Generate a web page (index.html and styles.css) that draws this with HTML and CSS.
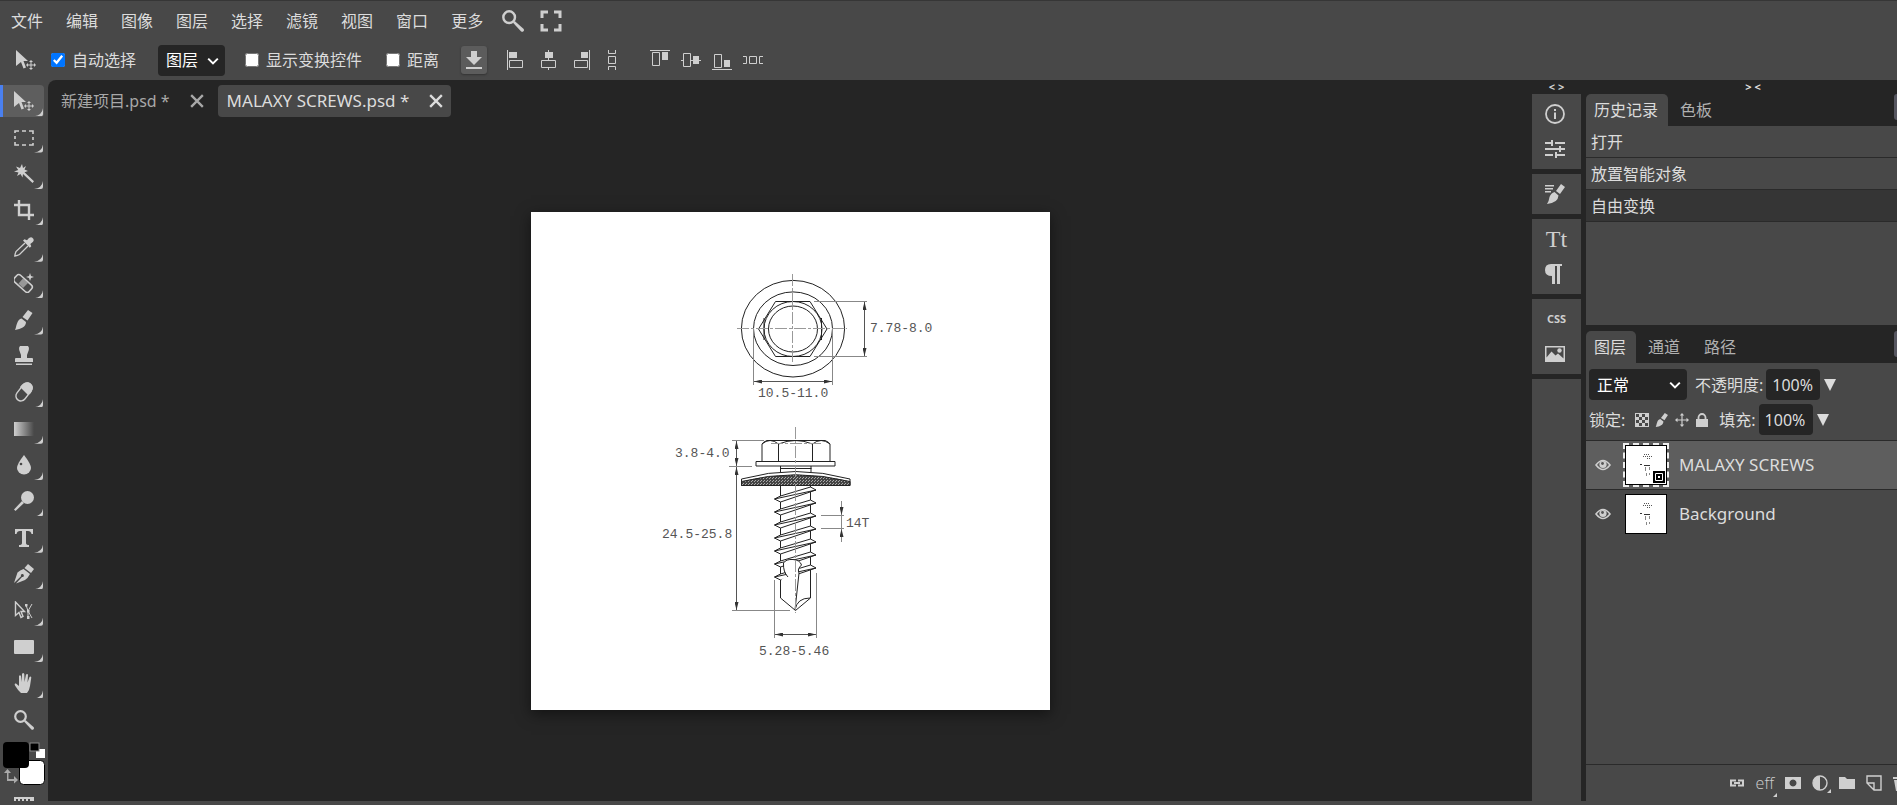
FILE: index.html
```html
<!DOCTYPE html>
<html lang="zh-CN">
<head>
  <meta charset="UTF-8">
  <title>MALAXY SCREWS.psd</title>
  <link rel="stylesheet" href="styles.css">
</head>
<body>
  <!-- shared icons -->
  <svg class="sprite" aria-hidden="true">
    <symbol id="i-move" viewBox="0 0 20 20"><path d="M0 0L12 11H7.500L10 17.500L7.500 18.500L5 12L0 16Z"/><path d="M15 10l2 2h-1.500v2.500H18V13l2 2-2 2v-1.500h-2.500V18H17l-2 2-2-2h1.500v-2.500H12V17l-2-2 2-2v1.500h2.500V12H13z"/></symbol>
    <symbol id="i-search" viewBox="0 0 20 20"><circle cx="6.500" cy="6.500" r="5.300" fill="none" stroke="currentColor" stroke-width="2.200"/><path d="M10 11.500l1.500-1.500 8 7q1 1.200 0 2.300t-2.300 0z"/></symbol>
    <symbol id="i-close" viewBox="0 0 12 12"><path d="M1 1l10 10M11 1L1 11" stroke="currentColor" stroke-width="2"/></symbol>
    <symbol id="i-chevron" viewBox="0 0 10 6"><path d="M1 1l4 4 4-4" fill="none" stroke="currentColor" stroke-width="1.700"/></symbol>
    <symbol id="i-brush" viewBox="0 0 20 20"><path d="M14 0l4.500 3-5 7.500-5-3.500zM7.500 8.500l4.500 3.500c0 5-5 7-11 8 1-2 1-4 2-6.500C4 10.500 5.500 9 7.500 8.500z"/></symbol>
    <symbol id="i-eye" viewBox="0 0 16 12"><path d="M1 6q7-9 14 0-7 9-14 0z" fill="none" stroke="currentColor" stroke-width="1.600"/><circle cx="8" cy="5.500" r="3.600"/><circle cx="7.500" cy="4.500" r="1.400" fill="#555"/></symbol>
    <symbol id="i-thumb" viewBox="0 0 40 38"><path d="M18 8.500h5M17 10.500h10M21 12.500h4" stroke="#555" stroke-dasharray="1 1"/><path d="M14 18.500h2M18 19.500h6" stroke="#333"/><path d="M19.500 21v4M23.500 21v3M20.500 27v3M23.500 27v2" stroke="#888" fill="none"/></symbol>
    <symbol id="thread" viewBox="0 0 42 16" overflow="visible"><path d="M6 7L0 10l6 3L41.500 1 36-2zM0 10L41.500 1" fill="#fff" stroke="#222" stroke-width="1"/></symbol>
  </svg>

  <div class="app">
    <header class="menubar">
      <nav class="menu">
        <button>文件</button>
        <button>编辑</button>
        <button>图像</button>
        <button>图层</button>
        <button>选择</button>
        <button>滤镜</button>
        <button>视图</button>
        <button>窗口</button>
        <button>更多</button>
      </nav>
      <button class="icon-btn" aria-label="搜索"><svg width="22" height="22"><use href="#i-search"/></svg></button>
      <button class="icon-btn" aria-label="全屏"><svg width="22" height="22" viewBox="0 0 22 22"><path d="M2 8V2h6M14 2h6v6M20 14v6h-6M8 20H2v-6" fill="none" stroke="currentColor" stroke-width="3"/></svg></button>
    </header>

    <div class="options">
      <svg class="current-tool" width="20" height="20"><use href="#i-move"/></svg>
      <label class="check auto"><input type="checkbox" checked>自动选择</label>
      <span class="select target">
        <select aria-label="选择目标"><option>图层</option></select>
        <svg width="12" height="8"><use href="#i-chevron"/></svg>
      </span>
      <label class="check transform"><input type="checkbox">显示变换控件</label>
      <label class="check distance"><input type="checkbox">距离</label>
      <button class="download" aria-label="下载"><svg width="18" height="20" viewBox="0 0 18 20"><path d="M6 1h6v6h5l-8 8-8-8h5zM1 17h16v2H1z"/></svg></button>
      <div class="align">
        <button aria-label="左对齐"><svg viewBox="0 0 20 20"><path d="M3 2h8v6H3z"/><path d="M1.500 0v20M3.500 10.500h13v7h-13z"/></svg></button>
        <button aria-label="水平居中"><svg viewBox="0 0 20 20"><path d="M6 2h8v6H6z"/><path d="M9.500 0v10M9.500 18v2M2.500 10.500h14v7h-14z"/></svg></button>
        <button aria-label="右对齐"><svg viewBox="0 0 20 20"><path d="M9 2h7v6H9z"/><path d="M17.500 0v20M2.500 10.500h13v7h-13z"/></svg></button>
        <button aria-label="垂直分布"><svg viewBox="0 0 20 20"><path d="M3.500 0v3.500h7V0M3.500 6.500h7v7h-7zM3.500 20v-3.500h7V20"/></svg></button>
      </div>
      <div class="align">
        <button aria-label="顶对齐"><svg viewBox="0 0 20 20"><path d="M12 2h6v8h-6z"/><path d="M0 .5h20M2.500 2.500h7v13h-7z"/></svg></button>
        <button aria-label="垂直居中"><svg viewBox="0 0 20 20"><path d="M12 6h6v8h-6z"/><path d="M0 10.500h2M10 10.500h10M2.500 3.500h7v13h-7z"/></svg></button>
        <button aria-label="底对齐"><svg viewBox="0 0 20 20"><path d="M12 10h6v7h-6z"/><path d="M0 19.500h20M2.500 4.500h7v13h-7z"/></svg></button>
        <button aria-label="水平分布"><svg viewBox="0 0 20 20"><path d="M0 6.500h3.500v7H0M6.500 6.500h7v7h-7zM20 6.500h-3.500v7H20"/></svg></button>
      </div>
    </div>

    <main class="body">
      <aside class="toolbar">
        <div class="tools">
          <button class="tool more active" aria-label="移动"><svg><use href="#i-move"/></svg></button>
          <button class="tool more" aria-label="选框"><svg viewBox="0 0 20 20"><path d="M1 5V3h4M8 3h4M15 3h4v3M19 9v3M19 15v2h-4M12 17H8M5 17H1v-3M1 11V8" fill="none" stroke="currentColor" stroke-width="1.600"/></svg></button>
          <button class="tool more" aria-label="魔棒"><svg viewBox="0 0 20 20"><path d="M8 0l1 4 3-2-1.500 3.500L14 7l-3.500 1.200 9.500 9-1.500 1.800L9 10l-.5 3.500L6.500 10 3 12l1.500-3.500L0 7.500 4.200 6 2 2.500 6 4z"/></svg></button>
          <button class="tool more" aria-label="裁剪"><svg viewBox="0 0 20 20"><path d="M0 5h15v15M5 0v15h15" fill="none" stroke="currentColor" stroke-width="2.400"/></svg></button>
          <button class="tool more" aria-label="吸管"><svg viewBox="0 0 20 20"><path d="M11 6L2 14.500Q1 17 .8 19q3-.5 4.700-1.500L14 9" fill="none" stroke="currentColor" stroke-width="1.300"/><path d="M9 3.500l1.500-1.200 2.500 1Q15.500-.5 18 .5q3 2 .8 4.500l-2.500 2 1 2.200-1.500 1.500z"/></svg></button>
          <button class="tool more" aria-label="修复"><svg viewBox="0 0 20 20"><rect x="-1" y="6" width="20" height="9" rx="3" transform="rotate(42 9 10.500)" fill="none" stroke="currentColor" stroke-width="1.600"/><path d="M9 5.500l5 4.500-5 5-4.500-4.500z" opacity=".6"/><path d="M16 0l1 3 3 1-3 1-1 3-1-3-3-1 3-1z"/></svg></button>
          <button class="tool more" aria-label="画笔"><svg><use href="#i-brush"/></svg></button>
          <button class="tool" aria-label="图章"><svg viewBox="0 0 20 20"><path d="M6 0h8q1.500 1.500.8 4L13 9v3h5q1 0 1 1v3H1v-3q0-1 1-1h5V9L5.200 4Q4.500 1.500 6 0zM2 17.500h16V19H2z"/></svg></button>
          <button class="tool more" aria-label="橡皮"><svg viewBox="0 0 20 20"><rect x="5" y="0" width="10" height="20" rx="5" transform="rotate(38 10 10)" fill="none" stroke="currentColor" stroke-width="1.400"/><path d="M6 5Q10-1 15 .5q5 2.500 3.500 7Q17 12 14 13z"/></svg></button>
          <button class="tool more" aria-label="渐变"><svg viewBox="0 0 20 20"><defs><linearGradient id="grad"><stop offset="0" stop-color="#cfcfcf"/><stop offset="1" stop-color="#484848"/></linearGradient></defs><path d="M0 3h20v14H0z" fill="url(#grad)"/></svg></button>
          <button class="tool more" aria-label="模糊"><svg viewBox="0 0 20 20"><path d="M10 0Q17 9 17 13a7 6.500 0 0 1-14 0Q3 9 10 0z"/><circle cx="7" cy="9" r="1.300" fill="#484848"/></svg></button>
          <button class="tool more" aria-label="减淡"><svg viewBox="0 0 20 20"><circle cx="13.500" cy="6.500" r="6.500"/><path d="M8 10l2 2-8.500 8L0 18.500z"/></svg></button>
          <button class="tool more" aria-label="文字"><svg viewBox="0 0 20 20"><path d="M1 1h18v5h-1.500Q17 3 14 3h-2v12q0 2 3 2v2H5v-2q3 0 3-2V3H6Q3 3 2.500 6H1z"/></svg></button>
          <button class="tool more" aria-label="钢笔"><svg viewBox="0 0 20 20"><path d="M14 0l6 5-3 4-6.500-5zM9.500 5l6.500 5q-2 4-5 6L2 19.500l6-6.500a1.500 1.500 0 1 0-1-.8L0 19l3.500-10.500Q6 6 9.500 5z"/></svg></button>
          <button class="tool more" aria-label="路径选择"><svg viewBox="0 0 20 20"><path d="M1.500 1l9 9.500H7l2 5-2 1L5 11.500l-3.500 3z" fill="none" stroke="currentColor" stroke-width="1.400"/><path d="M18 3l-4 7 4 7M12 4l2 6v6" fill="none" stroke="currentColor"/><path d="M11 3h2.500v2.500H11zM13 9h2.500v2.500H13zM13 15h2.500v3H13z"/></svg></button>
          <button class="tool more" aria-label="矩形"><svg viewBox="0 0 20 20"><rect y="3" width="20" height="14" rx="1"/></svg></button>
          <button class="tool more" aria-label="抓手"><svg viewBox="0 0 20 20"><path d="M5 10V3q1-1.500 2 0l.8 6L8 1q1.200-1.800 2.300 0L10.500 9 12 1.500q1.500-1.300 2 .2L13.500 9.500 15.500 4q1.300-1 1.800.5L16 13q-.5 4-3 7H7Q4 17.500 1 12.500 0 10 2 10.500L5 13z"/></svg></button>
          <button class="tool" aria-label="缩放"><svg><use href="#i-search"/></svg></button>
        </div>
        <svg class="swatches" width="48" height="46" viewBox="0 0 48 46">
          <rect x="36" y="8" width="9" height="9" fill="#fff"/>
          <rect x="30" y="2" width="9" height="8" stroke="#888"/>
          <rect x="19.500" y="19.500" width="25" height="24" rx="4" fill="#fff" stroke="#000"/>
          <rect x="3" y="1" width="26" height="26" rx="4"/>
          <path d="M4 32l3.500-4 3.500 4H8.500v6H14v-3l4 4-4 3.500V40H7v-8z" fill="#aaa"/>
        </svg>
        <svg class="quickmask" width="20" height="14" viewBox="0 0 20 14"><path d="M0 0h20v14H0z" fill="#cfcfcf"/><path d="M2 2h2v3H2zM6 2h2v3H6zM10 2h2v3h-2zM14 2h2v3h-2z" fill="#484848"/></svg>
      </aside>

      <section class="document">
        <div class="tabs">
          <div class="tab">新建项目.psd * <button aria-label="关闭"><svg width="14" height="14"><use href="#i-close"/></svg></button></div>
          <div class="tab active">MALAXY SCREWS.psd * <button aria-label="关闭"><svg width="14" height="14"><use href="#i-close"/></svg></button></div>
        </div>
        <div class="workspace">
          <svg class="artboard" width="519" height="498" viewBox="532 212 519 498">
            <defs>
              <pattern id="hatch" width="3" height="3" patternUnits="userSpaceOnUse"><rect width="3" height="3" fill="#444"/><path d="M0 0h1v1H0zM2 1h1v1H2z" fill="#aaa"/></pattern>
              <marker id="arrow" viewBox="0 0 8 4" refX="8" refY="2" markerWidth="8" markerHeight="4" orient="auto-start-reverse" markerUnits="userSpaceOnUse"><path d="M0 0l8 2-8 2z" fill="#333"/></marker>
            </defs>

            <!-- top view -->
            <g class="ink">
              <ellipse cx="794" cy="328.700" rx="51.600" ry="48.300"/>
              <ellipse cx="794" cy="328.700" rx="39.500" ry="36.800"/>
              <path d="M759.500 329L776.500 301.500H811L828 329L811 356.500H776.500Z"/>
              <ellipse cx="794" cy="329" rx="29" ry="27.500"/>
              <ellipse cx="794" cy="329" rx="24.500" ry="23"/>
              <path d="M765 318v22M822.500 318v22"/>
            </g>
            <path class="axis" d="M793.500 274v90M738 328.500h110"/>
            <g class="dim">
              <path d="M815 301.500h53M815 356.500h53M754.500 329v56M833.500 329v56"/>
              <path class="arrows" d="M865.500 302v54"/>
              <path class="arrows" d="M755 381.500h78"/>
            </g>
            <text x="871" y="332">7.78-8.0</text>
            <text x="759" y="397">10.5-11.0</text>

            <!-- side view -->
            <g class="ink">
              <path d="M763 462V444Q764 442 768 440.500H826Q830 442 831 444V462M779.500 462V444M813.500 462V444M763 444Q771 437 779.500 444Q796.500 437 813.500 444Q822 437 831 444"/>
              <path d="M757 461.500h79v4.500h-79z"/>
              <path d="M781.500 466v6M812 466v6M781.500 468.500h31"/>
              <path d="M742.500 479Q796.500 464 851 479V485.500H742.500Z"/>
              <path d="M742.500 481.500Q796.500 468 851 481.500V485.500H742.500Z" fill="url(#hatch)"/>
              <path d="M781.500 486V598L796.500 610.500L811.500 598V486"/>
            </g>
            <use href="#thread" x="775.500" y="489" width="42" height="16"/>
            <use href="#thread" x="775.500" y="502" width="42" height="16"/>
            <use href="#thread" x="775.500" y="515" width="42" height="16"/>
            <use href="#thread" x="775.500" y="528" width="42" height="16"/>
            <use href="#thread" x="775.500" y="541" width="42" height="16"/>
            <use href="#thread" x="775.500" y="554" width="42" height="16"/>
            <use href="#thread" x="775.500" y="567" width="42" height="16"/>
            <path d="M784.500 563Q786 559 794 559.500Q801 560 802.500 565Q799 569 800 573L797 606L782.500 597.500V579L789 576Q784 572 784.500 563Z" fill="#fff"/>
            <path class="ink" d="M789 577Q784 572 784.500 563Q787 559 794 559.500Q801 560 802.500 565Q798 569 800 573L796 610Q798 598 811 598"/>
            <path class="axis" d="M796.500 427v186M772 443.500h50"/>
            <g class="dim">
              <path d="M733 440.500h32M730 466.500h23M733 610.500h58M822 515.500h23M822 528.500h23M775.500 580v58M817.500 573v65"/>
              <path class="arrows" d="M737.500 441v25"/>
              <path class="arrows" d="M737.500 467v143"/>
              <path class="arrows" d="M776 634.500h41"/>
              <path marker-end="url(#arrow)" d="M842.500 501v14"/>
              <path marker-end="url(#arrow)" d="M842.500 542v-13"/>
              <path d="M842.500 515v14"/>
            </g>
            <text x="676" y="457">3.8-4.0</text>
            <text x="663" y="538">24.5-25.8</text>
            <text x="847" y="527">14T</text>
            <text x="760" y="655">5.28-5.46</text>
          </svg>
        </div>
      </section>

      <aside class="dock">
        <button class="collapse">&lt; &gt;</button>
        <div class="dock-group">
          <button aria-label="信息"><svg viewBox="0 0 20 20"><circle cx="10" cy="10" r="9" fill="none" stroke="currentColor" stroke-width="1.800"/><path d="M9 5h2v2H9zM9 8.500h2V15H9z"/></svg></button>
          <button aria-label="属性"><svg viewBox="0 0 20 20"><path d="M0 3h8v2H0zM10 3h10v2H10zM6 1h2v6H6zM0 9h14v2H0zM16 9h4v2h-4zM14 7h2v6h-2zM0 15h8v2H0zM12 15h8v2h-8zM10 13h2v6h-2z"/></svg></button>
        </div>
        <div class="dock-group">
          <button aria-label="画笔设置"><svg viewBox="0 0 20 20"><path d="M16 0l4 3-5 7-4-3zM9.500 8l4 3.500Q13 19 2 20q2-3 2.500-7Q6 9 9.500 8zM0 1h9v1.500H0zM0 4h8v1.500H0zM0 7h6v1.500H0z"/></svg></button>
        </div>
        <div class="dock-group">
          <button aria-label="字符"><span class="glyph">Tt</span></button>
          <button aria-label="段落"><svg viewBox="0 0 20 20"><path d="M6 0h11v2h-2v18h-3V2h-2v18H7v-8Q0 12 0 6t6-6z"/></svg></button>
        </div>
        <div class="dock-group">
          <button><span class="css-label">CSS</span></button>
          <button aria-label="图库"><svg viewBox="0 0 20 20"><path d="M0 2h20v16H0zM1.500 3.500v10l5-6 4 4 2.500-2 5.500 5v-11z" fill-rule="evenodd"/><circle cx="14.500" cy="6.500" r="2.200"/></svg></button>
        </div>
        <div class="dock-group rest"></div>
      </aside>

      <aside class="panels">
        <button class="collapse">&gt; &lt;</button>
        <section class="panel history">
          <div class="panel-tabs">
            <button class="active">历史记录</button>
            <button>色板</button>
            <i class="panel-menu"></i>
          </div>
          <ul class="history-list">
            <li>打开</li>
            <li>放置智能对象</li>
            <li class="current">自由变换</li>
          </ul>
        </section>

        <section class="panel layers">
          <div class="panel-tabs">
            <button class="active">图层</button>
            <button>通道</button>
            <button>路径</button>
            <i class="panel-menu"></i>
          </div>
          <div class="layer-options">
            <div class="row">
              <span class="select blend">
                <select aria-label="混合模式"><option>正常</option></select>
                <svg width="12" height="8"><use href="#i-chevron"/></svg>
              </span>
              <label for="opacity">不透明度:</label>
              <input type="text" id="opacity" value="100%">
              <button class="drop" aria-label="不透明度滑块"></button>
            </div>
            <div class="row">
              <span class="lock-label">锁定:</span>
              <div class="locks">
                <button aria-label="锁定透明"><svg viewBox="0 0 14 14"><path d="M0 0h14v14H0zM1 1v3h3V1zM7 1v3h3V1zM4 4v3h3V4zM10 4v3h3V4zM1 7v3h3V7zM7 7v3h3V7zM4 10v3h3v-3zM10 10v3h3v-3z" fill-rule="evenodd"/></svg></button>
                <button aria-label="锁定像素"><svg><use href="#i-brush"/></svg></button>
                <button aria-label="锁定位置"><svg viewBox="0 0 14 14"><path d="M7 0l2.200 2.500H7.600v3.900h3.900V4.800L14 7l-2.500 2.200V7.600H7.600v3.900h1.600L7 14l-2.200-2.500h1.600V7.600H2.500v1.600L0 7l2.500-2.200v1.600h3.900V2.500H4.800z"/></svg></button>
                <button aria-label="全部锁定"><svg viewBox="0 0 14 14"><path d="M1 6h12v8H1z"/><path d="M3.500 7V4.500a3.500 3.500 0 0 1 7 0V7" fill="none" stroke="currentColor" stroke-width="1.800"/></svg></button>
              </div>
              <label for="fill">填充:</label>
              <input type="text" id="fill" value="100%">
              <button class="drop" aria-label="填充滑块"></button>
            </div>
          </div>
          <ul class="layer-list">
            <li class="selected">
              <button class="eye" aria-label="显示"><svg width="16" height="12"><use href="#i-eye"/></svg></button>
              <span class="thumb"><svg width="40" height="38"><use href="#i-thumb"/></svg>
                <svg class="smart" width="12" height="12" viewBox="0 0 12 12"><path d="M0 0h12v12H0z" fill="#000"/><path d="M2.500 2.500h7v7h-7z" fill="none" stroke="#fff"/><path d="M5 5h2v2H5z" fill="#fff"/></svg>
              </span>
              MALAXY SCREWS
            </li>
            <li>
              <button class="eye" aria-label="显示"><svg width="16" height="12"><use href="#i-eye"/></svg></button>
              <span class="thumb"><svg width="40" height="38"><use href="#i-thumb"/></svg></span>
              Background
            </li>
          </ul>
          <footer class="layer-actions">
            <button aria-label="链接"><svg viewBox="0 0 16 16"><path d="M7 5.500H2v5h5M9 5.500h5v5H9M5 8h6" fill="none" stroke="currentColor" stroke-width="2"/></svg></button>
            <button class="more eff">eff</button>
            <button aria-label="蒙版"><svg viewBox="0 0 16 16"><path d="M0 2h16v12H0zM8 4.500a3.500 3.500 0 1 0 .01 0z" fill-rule="evenodd"/></svg></button>
            <button class="more" aria-label="调整"><svg viewBox="0 0 16 16"><circle cx="8" cy="8" r="7" fill="none" stroke="currentColor" stroke-width="1.400"/><path d="M8 1a7 7 0 0 0 0 14z"/></svg></button>
            <button aria-label="新建组"><svg viewBox="0 0 16 16"><path d="M0 2h6l2 2h8v10H0z"/></svg></button>
            <button aria-label="新建图层"><svg viewBox="0 0 16 16"><path d="M1 8V1h14v14H8zM1 8h7v7" fill="none" stroke="currentColor" stroke-width="1.400"/></svg></button>
            <button aria-label="删除"><svg viewBox="0 0 16 16"><path d="M0 2h16v2H0zM1 5h14l-2 11H3z"/></svg></button>
          </footer>
        </section>
      </aside>
    </main>
  </div>
</body>
</html>
```

FILE: styles.css
```css
* {
  box-sizing: border-box;
}
body {
  margin: 0;
  background: #484848;
  color: #dcdcdc;
  font-family: 'Noto Sans', 'Noto Sans CJK SC', sans-serif;
  font-size: 16px;
  line-height: 24px;
  overflow: hidden;
}
button, select, input {
  font: inherit;
  color: inherit;
}
button {
  background: none;
  border: 0;
  padding: 0;
  cursor: pointer;
}
svg {
  display: block;
  fill: currentColor;
}
ul {
  list-style: none;
  margin: 0;
  padding: 0;
}
.sprite {
  position: absolute;
  width: 0;
  height: 0;
}
.app {
  display: flex;
  flex-direction: column;
  height: 100vh;
  padding-bottom: 4px;
}

/* menu bar */
.menubar {
  display: flex;
  align-items: center;
  height: 40px;
  padding-left: 11px;
  gap: 16px;
  border-top: 1px solid #363636;
  flex-shrink: 0;
}
.menu {
  display: flex;
  gap: 23px;
  margin-right: 3px;
}
.icon-btn {
  color: #cfcfcf;
}

/* tool options */
.options {
  display: flex;
  align-items: center;
  height: 40px;
  padding-left: 16px;
  flex-shrink: 0;
}
.current-tool, .tool, .dock, .align, .download {
  color: #cfcfcf;
}
.check {
  display: flex;
  align-items: center;
  gap: 7px;
}
.check input {
  width: 14px;
  height: 14px;
  margin: 0;
}
.check.auto {
  margin-left: 15px;
}
.check.transform {
  margin-left: 20px;
}
.check.distance {
  margin-left: 24px;
}
.select {
  position: relative;
  color: #fff;
}
.select select {
  appearance: none;
  width: 100%;
  height: 31px;
  padding: 0 8px;
  border: 0;
  border-radius: 4px;
  background: #252525;
}
.select svg {
  position: absolute;
  right: 6px;
  top: 12px;
  pointer-events: none;
}
.target {
  width: 67px;
  margin-left: 22px;
}
.download {
  display: flex;
  justify-content: center;
  align-items: center;
  width: 26px;
  height: 28px;
  margin-left: 22px;
  border-radius: 3px;
  background: #5c5c5c;
  box-shadow: 0 1px 2px #333;
}
.align {
  display: flex;
  gap: 13px;
  margin-left: 19px;
}
.align + .align {
  gap: 11px;
  margin-left: 25px;
}
.align svg {
  width: 20px;
  height: 20px;
}
.align path:last-child {
  fill: none;
  stroke: currentColor;
}

/* main area */
.body {
  display: flex;
  flex: 1;
  min-height: 0;
}
.toolbar {
  width: 48px;
  flex-shrink: 0;
  padding-top: 3px;
  overflow: hidden;
}
.tools {
  display: grid;
  grid-auto-rows: 1fr;
  height: 655px;
}
.tool {
  position: relative;
  align-self: center;
  width: 44px;
  height: 32px;
  padding-left: 14px;
}
.tool svg {
  width: 20px;
  height: 20px;
}
.tool.active {
  padding-left: 11px;
  border-left: 3px solid #4a80f0;
  border-radius: 0 4px 4px 0;
  background: #5e5e5e;
}
.tool.more::after {
  content: '';
  position: absolute;
  right: 1px;
  bottom: 1px;
  width: 9px;
  height: 8px;
  background: #cfcfcf;
  clip-path: path('M9 0V6Q9 8 7 8H0Q8 7 9 0Z');
}
.swatches {
  margin-top: 3px;
  fill: #000;
}
.quickmask {
  margin: 10px 0 0 14px;
}

/* document */
.document {
  flex: 1;
  min-width: 0;
  display: flex;
  flex-direction: column;
  border-top-left-radius: 8px;
  background: #252525;
}
.tabs {
  display: flex;
  padding-top: 5px;
  gap: 4px;
}
.tab {
  display: flex;
  align-items: center;
  gap: 20px;
  height: 32px;
  padding: 0 10px 0 13px;
  color: #a8a8a8;
}
.tab.active {
  padding: 0 8px 0 9px;
  font-size: 17px;
  border-radius: 4px;
  background: #484848;
  color: #dcdcdc;
}
.workspace {
  flex: 1;
  display: flex;
  justify-content: center;
  align-items: center;
  padding-top: 4px;
}
.artboard {
  background: #fff;
  box-shadow: 0 4px 14px rgba(0, 0, 0, 0.5);
}
.artboard text {
  font-family: 'Liberation Mono', monospace;
  font-size: 13px;
  fill: #555;
}
.ink {
  fill: none;
  stroke: #222;
}
.dim {
  fill: none;
  stroke: #888;
}
.axis {
  fill: none;
  stroke: #999;
  stroke-dasharray: 12 2 3 2;
}
.arrows {
  stroke: #555;
  marker-start: url(#arrow);
  marker-end: url(#arrow);
}

/* icon dock */
.collapse {
  height: 14px;
  font-size: 11px;
  font-weight: bold;
  line-height: 14px;
  flex-shrink: 0;
}
.dock {
  display: flex;
  flex-direction: column;
  width: 49px;
  background: #252525;
}
.dock-group {
  display: grid;
  gap: 15px;
  margin-bottom: 5px;
  padding: 10px 13px;
  background: #484848;
}
.dock-group.rest {
  flex: 1;
  margin-bottom: 0;
}
.dock-group button {
  height: 20px;
}
.dock-group svg {
  width: 20px;
  height: 20px;
}
.glyph {
  display: block;
  font-family: 'Liberation Serif', serif;
  font-size: 24px;
  line-height: 20px;
}
.css-label {
  display: block;
  font-size: 11px;
  font-weight: bold;
  line-height: 20px;
}

/* right panels */
.panels {
  display: flex;
  flex-direction: column;
  width: 316px;
  padding-left: 5px;
  background: #252525;
}
.panels .collapse {
  width: 338px;
  margin-left: -2px;
}
.panel {
  display: flex;
  flex-direction: column;
}
.history {
  height: 231px;
  margin-bottom: 6px;
}
.layers {
  flex: 1;
}
.panel-tabs {
  display: flex;
  height: 32px;
  background: #252525;
}
.panel-tabs button {
  padding: 0 12px;
  color: #b0b0b0;
}
.panel-tabs button.active {
  padding: 0 10px 0 8px;
  border-radius: 5px 5px 0 0;
  background: #484848;
  color: #dcdcdc;
}
.panel-menu {
  width: 3px;
  height: 26px;
  margin-left: auto;
  border-radius: 3px 0 0 3px;
  background: #565660;
}
.history-list {
  flex: 1;
  background: #484848;
}
.history-list li {
  height: 32px;
  padding-left: 5px;
  border-bottom: 1px solid #2a2a2a;
  line-height: 32px;
}
.history-list .current {
  background: #353535;
}
.layer-options {
  display: grid;
  gap: 4px;
  padding: 6px 3px 5px;
  background: #484848;
}
.row {
  display: flex;
  align-items: center;
}
.row input {
  width: 54px;
  height: 31px;
  padding: 0 6px;
  border: 0;
  border-radius: 4px;
  background: #252525;
}
.blend {
  width: 98px;
  margin-right: 8px;
}
.row label {
  margin-right: 3px;
}
.drop {
  margin-left: 4px;
  border: 6px solid transparent;
  border-top: 12px solid #dcdcdc;
  border-bottom: 0;
}
.locks {
  display: flex;
  gap: 6px;
  margin: 0 10px;
  color: #cfcfcf;
}
.locks svg {
  width: 14px;
  height: 14px;
}
.layer-list {
  flex: 1;
  background: #484848;
  border-top: 1px solid #2a2a2a;
}
.layer-list li {
  display: flex;
  align-items: center;
  height: 48px;
  padding-left: 9px;
  font-size: 17px;
}
.layer-list .selected {
  height: 49px;
  background: #5e5e5e;
  border-bottom: 1px solid #2a2a2a;
}
.eye {
  color: #cfcfcf;
}
.thumb {
  position: relative;
  margin: 0 12px 0 14px;
  border: 1px solid #000;
  background: #fff;
}
.selected .thumb {
  outline: 2px dashed #eee;
}
.smart {
  position: absolute;
  right: 1px;
  bottom: 1px;
}
.layer-actions {
  display: flex;
  align-items: center;
  justify-content: flex-end;
  gap: 11px;
  height: 37px;
  margin-right: -12px;
  border-top: 1px solid #2a2a2a;
  background: #484848;
  color: #cfcfcf;
}
.layer-actions button {
  position: relative;
}
.layer-actions svg {
  width: 16px;
  height: 16px;
}
.layer-actions .eff {
  font-family: 'Open Sans', sans-serif;
  font-weight: 300;
}
.layer-actions .more::after {
  content: '';
  position: absolute;
  right: -3px;
  bottom: -2px;
  border: 2px solid #cfcfcf;
  border-top-color: transparent;
  border-left-color: transparent;
}
```
